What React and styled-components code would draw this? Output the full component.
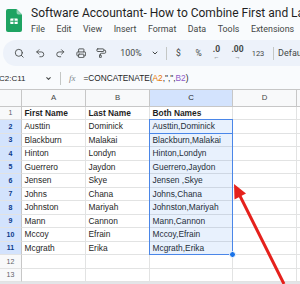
import React from "react";
import styled, { createGlobalStyle } from "styled-components";
import { Search, Undo2, Redo2, Printer, PaintRoller, ChevronDown } from "lucide-react";

const Global = createGlobalStyle`
  html, body { margin: 0; padding: 0; }
  body { background: #f9fbfd; }
`;

const Page = styled.div`
  position: relative;
  width: 300px;
  height: 284px;
  overflow: hidden;
  display: flex;
  flex-direction: column;
  background: #f9fbfd;
  font-family: "Liberation Sans", Arial, sans-serif;
  color: #1f1f1f;
`;

const Header = styled.header`
  display: flex;
  align-items: flex-start;
  gap: 9px;
  height: 40px;
  padding: 6px 0 0 6px;
  box-sizing: border-box;
  white-space: nowrap;
`;

const Logo = styled.svg`
  flex: none;
  margin-top: 3px;
`;

const TitleBlock = styled.div`
  display: flex;
  flex-direction: column;
`;

const Title = styled.div`
  font-family: Roboto, "Liberation Sans", sans-serif;
  font-size: 12px;
  line-height: 14px;
  color: #1f1f1f;
`;

const Menu = styled.nav`
  display: flex;
  gap: 11.5px;
  margin-top: 4px;
  font-family: Roboto, "Liberation Sans", sans-serif;
  font-size: 8.9px;
  line-height: 11px;
  color: #444746;
`;

const Toolbar = styled.div`
  display: flex;
  align-items: center;
  height: 26px;
  margin-left: 3px;
  padding-left: 6px;
  border-radius: 13px 0 0 13px;
  background: #edf2fa;
  white-space: nowrap;
  color: #444746;
  font-size: 8.5px;
`;

const ToolButton = styled.div`
  flex: none;
  display: flex;
  align-items: center;
  justify-content: center;
  width: ${(p) => p.$w || 20.5}px;
  margin-left: ${(p) => p.$ml || 0}px;
  height: 20px;
  font-family: Roboto, "Liberation Sans", sans-serif;
  font-size: ${(p) => p.$fs || 8.5}px;
`;

const Stack = styled.span`
  display: flex;
  flex-direction: column;
  align-items: center;
  line-height: 7px;
  font-weight: bold;
`;

const Tiny = styled.span`
  font-size: 6px;
`;

const ToolSep = styled.div`
  flex: none;
  width: 1px;
  height: 13px;
  margin-left: ${(p) => p.$ml || 0}px;
  background: #c4c7c5;
`;

const FormulaBar = styled.div`
  display: flex;
  align-items: center;
  height: 24px;
  font-size: 8px;
  white-space: nowrap;
  color: #1f1f1f;
`;

const NameBox = styled.div`
  display: flex;
  align-items: center;
  justify-content: space-between;
  width: 61px;
  margin-left: -1px;
  padding-right: 8px;
  box-sizing: border-box;
`;

const Fx = styled.span`
  margin-left: 8px;
  font-family: "Liberation Serif", serif;
  font-style: italic;
  font-size: 9px;
  color: #80868b;
`;

const Formula = styled.span`
  margin-left: 8px;
  font-size: 8.3px;
`;

const Ref = styled.span`
  color: ${(p) => p.$c};
`;

const Grid = styled.div`
  display: grid;
  grid-template-columns: 22px 64px 64px 83px 64px 30px;
  grid-template-rows: 16.5px repeat(13, 13.5px);
  background: #fff;
  border-top: 1px solid #c7c7c7;
  margin-top: -1px;
`;

const Cell = styled.div`
  grid-column: ${(p) => p.$c};
  grid-row: ${(p) => p.$r};
  display: flex;
  align-items: center;
  padding: 0 2.5px;
  box-sizing: border-box;
  border-right: 1px solid #e2e3e3;
  border-bottom: 1px solid #e2e3e3;
  font-size: 8.4px;
  font-weight: ${(p) => (p.$bold ? "bold" : "normal")};
  color: #1f1f1f;
  white-space: nowrap;
  overflow: hidden;
`;

const ColHead = styled.div`
  grid-column: ${(p) => p.$c};
  grid-row: 1;
  display: flex;
  align-items: center;
  justify-content: center;
  box-sizing: border-box;
  border-right: 1px solid #c7c7c7;
  border-bottom: 1px solid #c7c7c7;
  background: ${(p) => (p.$sel ? "#d3e3fd" : "#f8f9fa")};
  font-size: 7.8px;
  color: ${(p) => (p.$sel ? "#1f1f1f" : "#444746")};
`;

const RowHead = styled.div`
  grid-column: 1;
  grid-row: ${(p) => p.$r};
  display: flex;
  align-items: center;
  justify-content: center;
  box-sizing: border-box;
  border-right: 1px solid #c7c7c7;
  border-bottom: 1px solid #e2e3e3;
  background: ${(p) => (p.$sel ? "#d3e3fd" : "#f8f9fa")};
  font-size: 7px;
  font-weight: ${(p) => (p.$sel ? "bold" : "normal")};
  color: ${(p) => (p.$sel ? "#0b3a8a" : "#5f6368")};
`;

const Selection = styled.div`
  grid-column: 4;
  grid-row: 3 / 13;
  position: relative;
  z-index: 1;
  margin: -1px 0 0 -1px;
  border: 1px solid #4a86e8;
  background: rgba(26, 115, 232, 0.1);
  pointer-events: none;
`;

const ActiveCell = styled.div`
  grid-column: 4;
  grid-row: 3;
  position: relative;
  z-index: 2;
  margin: -1px 0 0 -1px;
  border: 1.5px solid #4a86e8;
  pointer-events: none;
`;

const Handle = styled.span`
  position: absolute;
  right: -3.5px;
  bottom: -3.5px;
  width: 5px;
  height: 5px;
  border-radius: 50%;
  background: #1a73e8;
  border: 1px solid #fff;
`;

const Bottom = styled.div`
  flex: 1;
  background: #e3e5e8;
`;

const Arrow = styled.svg`
  position: absolute;
  left: 0;
  top: 0;
  pointer-events: none;
  z-index: 5;
`;

const rows = [
  ["First Name", "Last Name", "Both Names"],
  ["Austtin", "Dominick", "Austtin,Dominick"],
  ["Blackburn", "Malakai", "Blackburn,Malakai"],
  ["Hinton", "Londyn", "Hinton,Londyn"],
  ["Guerrero", "Jaydon", "Guerrero,Jaydon"],
  ["Jensen", "Skye", "Jensen ,Skye"],
  ["Johns", "Chana", "Johns,Chana"],
  ["Johnston", "Mariyah", "Johnston,Mariyah"],
  ["Mann", "Cannon", "Mann,Cannon"],
  ["Mccoy", "Efrain", "Mccoy,Efrain"],
  ["Mcgrath", "Erika", "Mcgrath,Erika"],
  ["", "", ""],
  ["", "", ""],
];

const cols = ["A", "B", "C", "D", ""];

function SheetsLogo() {
  return (
    <Logo width="16" height="23" viewBox="0 0 16 23">
      <path d="M2 0h8.6L16 5.4V21a2 2 0 0 1-2 2H2a2 2 0 0 1-2-2V2a2 2 0 0 1 2-2z" fill="#1ea362" />
      <path d="M10.6 0v3.8a1.6 1.6 0 0 0 1.6 1.6H16z" fill="#8ed1b1" />
      <rect x="4.3" y="9.5" width="7.4" height="5.6" rx="0.6" fill="#fff" />
      <path d="M8 9.5v5.6M4.3 12.3h7.4" stroke="#1ea362" strokeWidth="1.1" />
    </Logo>
  );
}

export default function App() {
  const icon = { size: 10.5, strokeWidth: 2, color: "#444746" };
  return (
    <>
      <Global />
      <Page>
        <Header>
          <SheetsLogo />
          <TitleBlock>
            <Title>Software Accountant- How to Combine First and Last Names</Title>
            <Menu>
              <span>File</span>
              <span>Edit</span>
              <span>View</span>
              <span>Insert</span>
              <span>Format</span>
              <span>Data</span>
              <span>Tools</span>
              <span>Extensions</span>
              <span>Help</span>
            </Menu>
          </TitleBlock>
        </Header>

        <Toolbar>
          <ToolButton><Search {...icon} /></ToolButton>
          <ToolButton><Undo2 {...icon} /></ToolButton>
          <ToolButton><Redo2 {...icon} /></ToolButton>
          <ToolButton><Printer {...icon} /></ToolButton>
          <ToolButton><PaintRoller {...icon} /></ToolButton>
          <ToolButton $w={25} $ml={7} $fs={8.8}>100%</ToolButton>
          <ToolButton $w={10} $ml={6}><ChevronDown size={8} strokeWidth={3} color="#444746" /></ToolButton>
          <ToolSep $ml={6} />
          <ToolButton $w={12} $ml={6}>$</ToolButton>
          <ToolButton $w={12} $ml={8}>%</ToolButton>
          <ToolButton $w={12} $ml={6}>
            <Stack>.0<Tiny>←</Tiny></Stack>
          </ToolButton>
          <ToolButton $w={14} $ml={8}>
            <Stack>.00<Tiny>→</Tiny></Stack>
          </ToolButton>
          <ToolButton $w={13} $ml={7} $fs={7.5}>123</ToolButton>
          <ToolSep $ml={8} />
          <ToolButton $w={30} $ml={4} $fs={9}>Default</ToolButton>
        </Toolbar>

        <FormulaBar>
          <NameBox>
            <span>C2:C11</span>
            <ChevronDown size={7} strokeWidth={3.5} color="#444746" />
          </NameBox>
          <ToolSep />
          <Fx>fx</Fx>
          <Formula>
            =CONCATENATE(<Ref $c="#e37400">A2</Ref>,",",<Ref $c="#8e5cc8">B2</Ref>)
          </Formula>
        </FormulaBar>

        <Grid>
          <ColHead $c={1} />
          {cols.map((c, i) => (
            <ColHead key={i} $c={i + 2} $sel={c === "C"}>{c}</ColHead>
          ))}
          {rows.map((r, ri) => (
            <React.Fragment key={ri}>
              <RowHead $r={ri + 2} $sel={ri >= 1 && ri <= 10}>{ri + 1}</RowHead>
              {[...r, "", ""].map((v, ci) => (
                <Cell key={ci} $r={ri + 2} $c={ci + 2} $bold={ri === 0}>{v}</Cell>
              ))}
            </React.Fragment>
          ))}
          <Selection>
            <Handle />
          </Selection>
          <ActiveCell />
        </Grid>
        <Bottom />

        <Arrow width="300" height="284" viewBox="0 0 300 284">
          <line x1="284" y1="284" x2="239" y2="194" stroke="#e5211c" strokeWidth="3" />
          <polygon points="234,184 246,193.5 234.5,199.5" fill="#e5211c" />
        </Arrow>
      </Page>
    </>
  );
}
